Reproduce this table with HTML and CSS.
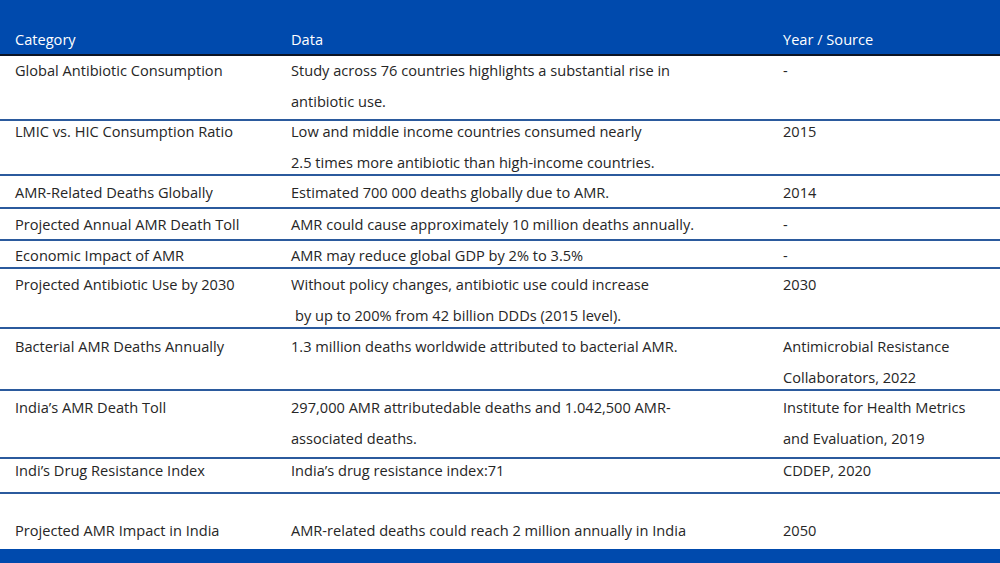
FILE: index.html
```html
<!DOCTYPE html>
<html lang="en">
<head>
<meta charset="utf-8">
<title>AMR Data Table</title>
<link rel="stylesheet" href="styles.css">
</head>
<body>
<div class="table">
  <div class="row head">
    <div class="cell">Category</div>
    <div class="cell">Data</div>
    <div class="cell">Year / Source</div>
  </div>
  <div class="row r1">
    <div class="cell">Global Antibiotic Consumption</div>
    <div class="cell">Study across 76 countries highlights a substantial rise in<br>antibiotic use.</div>
    <div class="cell">-</div>
  </div>
  <div class="row r2">
    <div class="cell">LMIC vs. HIC Consumption Ratio</div>
    <div class="cell">Low and middle income countries consumed nearly<br>2.5 times more antibiotic than high-income countries.</div>
    <div class="cell">2015</div>
  </div>
  <div class="row r3">
    <div class="cell">AMR-Related Deaths Globally</div>
    <div class="cell">Estimated 700 000 deaths globally due to AMR.</div>
    <div class="cell">2014</div>
  </div>
  <div class="row r4">
    <div class="cell">Projected Annual AMR Death Toll</div>
    <div class="cell">AMR could cause approximately 10 million deaths annually.</div>
    <div class="cell">-</div>
  </div>
  <div class="row r5">
    <div class="cell">Economic Impact of AMR</div>
    <div class="cell">AMR may reduce global GDP by 2% to 3.5%</div>
    <div class="cell">-</div>
  </div>
  <div class="row r6">
    <div class="cell">Projected Antibiotic Use by 2030</div>
    <div class="cell">Without policy changes, antibiotic use could increase<br><span class="indent">by up to 200% from 42 billion DDDs (2015 level).</span></div>
    <div class="cell">2030</div>
  </div>
  <div class="row r7">
    <div class="cell">Bacterial AMR Deaths Annually</div>
    <div class="cell">1.3 million deaths worldwide attributed to bacterial AMR.</div>
    <div class="cell">Antimicrobial Resistance<br>Collaborators, 2022</div>
  </div>
  <div class="row r8">
    <div class="cell">India’s AMR Death Toll</div>
    <div class="cell">297,000 AMR attributedable deaths and 1.042,500 AMR-<br>associated deaths.</div>
    <div class="cell">Institute for Health Metrics<br>and Evaluation, 2019</div>
  </div>
  <div class="row r9">
    <div class="cell">Indi’s Drug Resistance Index</div>
    <div class="cell">India’s drug resistance index:71</div>
    <div class="cell">CDDEP, 2020</div>
  </div>
  <div class="row r10">
    <div class="cell">Projected AMR Impact in India</div>
    <div class="cell">AMR-related deaths could reach 2 million annually in India</div>
    <div class="cell">2050</div>
  </div>
  <div class="footer"></div>
</div>
</body>
</html>
```

FILE: styles.css
```css
* { box-sizing: border-box; }

html, body {
  margin: 0;
  padding: 0;
  background: #ffffff;
}

body {
  width: 1000px;
  height: 563px;
  overflow: hidden;
  font-family: "Open Sans", "Noto Sans", sans-serif;
  font-size: 14.6px;
  color: #262626;
}

.table {
  display: flex;
  flex-direction: column;
  width: 1000px;
}

.row {
  --h: 33px;
  --pt: 0px;
  display: grid;
  grid-template-columns: 276px 492px 1fr;
  padding-left: 15px;
  height: var(--h);
  line-height: 31px;
  border-bottom: 2px solid #2b5a9d;
  white-space: nowrap;
}

.cell {
  margin-top: var(--pt);
}

.indent { padding-left: 4px; }

.head {
  --h: 56px;
  --pt: 24px;
  background: #004aad;
  color: #ffffff;
  border-bottom: 2px solid #0c1424;
}

.r1  { --h: 65px; --pt: -1px; }
.r2  { --h: 55px; --pt: -5px; }
.r3  { --h: 33px; --pt: 1px; }
.r4  { --h: 32px; --pt: 0px; }
.r5  { --h: 28px; --pt: -1px; }
.r6  { --h: 60px; --pt: 0px; }
.r7  { --h: 62px; --pt: 2px; }
.r8  { --h: 68px; --pt: 1px; }
.r9  { --h: 35px; --pt: -4px; }
.r10 { --h: 55px; --pt: 21px; border-bottom: none; }

.footer {
  height: 14px;
  background: #004aad;
}
```
